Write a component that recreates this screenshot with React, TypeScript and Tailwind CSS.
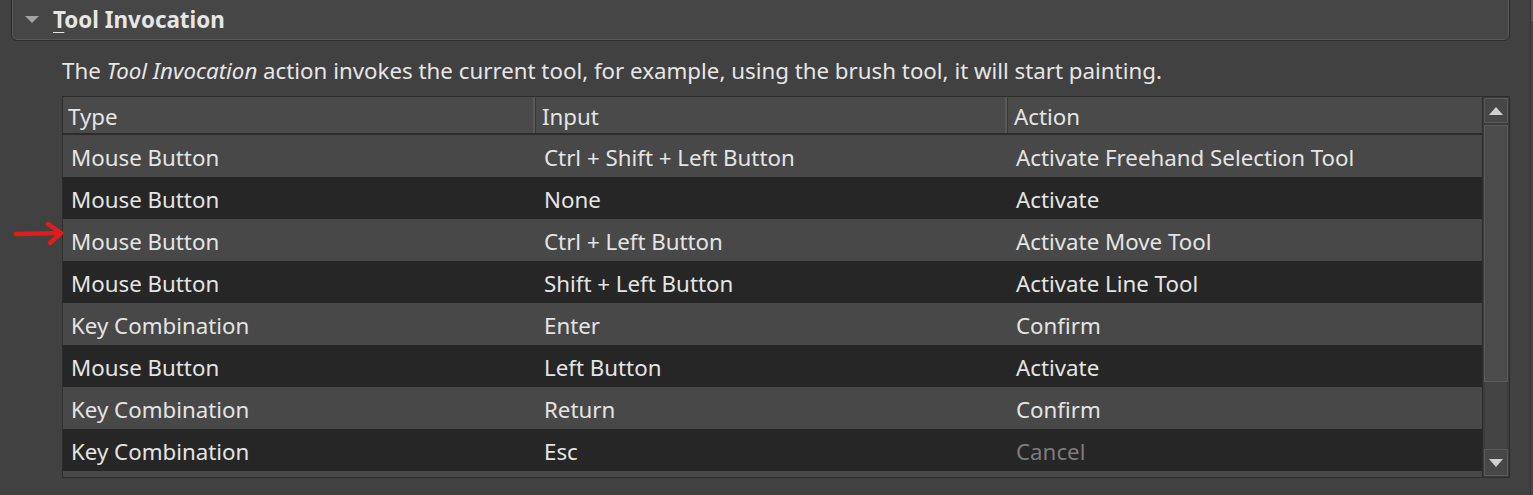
import React from "react";

const rows: { type: string; input: string; action: string; disabled?: boolean }[] = [
  { type: "Mouse Button", input: "Ctrl + Shift + Left Button", action: "Activate Freehand Selection Tool" },
  { type: "Mouse Button", input: "None", action: "Activate" },
  { type: "Mouse Button", input: "Ctrl + Left Button", action: "Activate Move Tool" },
  { type: "Mouse Button", input: "Shift + Left Button", action: "Activate Line Tool" },
  { type: "Key Combination", input: "Enter", action: "Confirm" },
  { type: "Mouse Button", input: "Left Button", action: "Activate" },
  { type: "Key Combination", input: "Return", action: "Confirm" },
  { type: "Key Combination", input: "Esc", action: "Cancel", disabled: true },
];

export default function App() {
  return (
    <div className="w-[1533px] h-[495px] bg-[#414141] overflow-hidden flex font-['Noto_Sans','Open_Sans',sans-serif] text-[#e4e4e4] relative">
      <div className="flex-1 flex flex-col">
        {/* Group header */}
        <div className="ml-[11px] w-[1499px] h-[45px] -mt-[4px] rounded-b-[6px] border border-[#2c2c2c] shadow-[inset_0_0_0_1px_#585858] bg-[#464646] flex items-center pt-[3px] shrink-0">
          <svg width="14" height="8" viewBox="0 0 14 8" className="ml-[13px]">
            <polygon points="0,0 14,0 7,7" fill="#a3a3a3" />
          </svg>
          <span className="ml-[14px] text-[22.4px] font-bold text-[#e6e6e6] leading-none">
            <span className="underline underline-offset-[4px] decoration-[1px]">T</span>ool Invocation
          </span>
        </div>

        {/* Description */}
        <div className="ml-[62px] mt-[16px] text-[22.3px] leading-[28px] text-[#e6e6e6] shrink-0">
          The <i>Tool Invocation</i> action invokes the current tool, for example, using the brush tool, it will start painting.
        </div>

        {/* Table */}
        <div className="ml-[62px] mt-[11px] w-[1448px] h-[382px] border border-[#2d2d2d] flex bg-[#3a3a3a] shrink-0">
          <div className="flex-1 flex flex-col overflow-hidden">
            <div className="h-[38px] bg-[#4a4a4a] border-b-2 border-[#2b2b2b] flex items-center text-[22.3px] shrink-0">
              <div className="w-[473px] h-full flex items-center pl-[5px] pt-[3px] border-r border-r-[#383838] shadow-[inset_-2px_0_0_#585858]">Type</div>
              <div className="w-[472px] h-full flex items-center pl-[6px] pt-[3px] border-r border-r-[#383838] shadow-[inset_-2px_0_0_#585858]">Input</div>
              <div className="flex-1 h-full flex items-center pl-[6px] pt-[3px]">Action</div>
            </div>
            {rows.map((r, i) => (
              <div
                key={i}
                className={`h-[42px] shrink-0 flex items-center pt-[3px] text-[22.3px] ${i % 2 === 0 ? "bg-[#484848]" : "bg-[#262626]"}`}
              >
                <div className="w-[473px] pl-[8px]">{r.type}</div>
                <div className="w-[472px] pl-[8px]">{r.input}</div>
                <div className={`flex-1 pl-[8px] ${r.disabled ? "text-[#7c7c7c]" : ""}`}>{r.action}</div>
              </div>
            ))}
            <div className="h-[6px] shrink-0 bg-[#484848]" />
          </div>

          {/* Scrollbar */}
          <div className="w-[27px] bg-[#3c3c3c] border-l border-[#2d2d2d] flex flex-col px-[1px] py-[1px]">
            <div className="h-[25px] bg-[#474747] border border-[#5a5a5a] flex items-center justify-center">
              <svg width="14" height="8" viewBox="0 0 14 8">
                <polygon points="0,8 14,8 7,0" fill="#cfcfcf" />
              </svg>
            </div>
            <div className="mt-[2px] h-[257px] bg-[#4b4b4b] border border-[#5a5a5a]" />
            <div className="flex-1 bg-[#444444] border-x border-[#3a3a3a]" />
            <div className="h-[27px] bg-[#474747] border border-[#5a5a5a] flex items-center justify-center">
              <svg width="14" height="8" viewBox="0 0 14 8">
                <polygon points="0,0 14,0 7,8" fill="#cfcfcf" />
              </svg>
            </div>
          </div>
        </div>
      </div>

      {/* right edge strip */}
      <div className="w-[3px] border-l border-[#333] flex flex-col">
        <div className="h-[21px] bg-[#5a5a5a]" />
        <div className="flex-1 bg-[#464646]" />
      </div>

      {/* red arrow annotation */}
      <svg className="absolute left-[13px] top-[221px]" width="52" height="26" viewBox="0 0 52 26">
        <path d="M3 13 L47 12" stroke="#e01c1c" strokeWidth="4.5" strokeLinecap="round" fill="none" />
        <path d="M35 3 L48 12 L37 22" stroke="#e01c1c" strokeWidth="4.5" strokeLinecap="round" strokeLinejoin="round" fill="none" />
      </svg>
    </div>
  );
}
